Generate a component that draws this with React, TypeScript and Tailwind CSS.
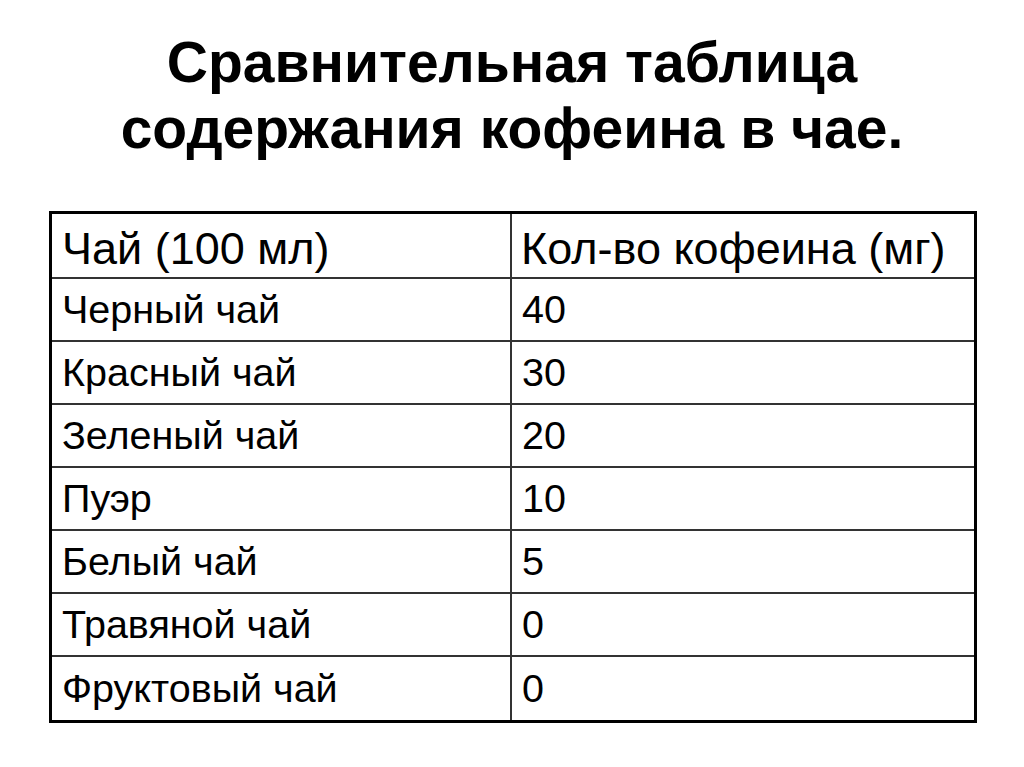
import React from "react";

const rows: [string, string][] = [
  ["Черный чай", "40"],
  ["Красный чай", "30"],
  ["Зеленый чай", "20"],
  ["Пуэр", "10"],
  ["Белый чай", "5"],
  ["Травяной чай", "0"],
  ["Фруктовый чай", "0"],
];

export default function App() {
  return (
    <div
      className="w-[1024px] h-[767px] bg-white text-black overflow-hidden"
      style={{ fontFamily: '"Liberation Sans", Arial, sans-serif' }}
    >
      <h1 className="pt-[29px] text-center font-bold text-[57px] leading-[66px]">
        Сравнительная таблица
        <br />
        содержания кофеина в чае.
      </h1>
      <div className="mt-[50px] ml-[49px] w-[928px] border-[3px] border-black">
        <div className="flex h-[65px] border-b-2 border-[#333]">
          <div className="w-[460px] border-r-2 border-[#333] flex items-center pl-[10px] pt-[5px] text-[45px] leading-none">
            Чай (100 мл)
          </div>
          <div className="flex-1 flex items-center pl-[9px] pt-[5px] text-[45px] leading-none">
            Кол-во кофеина (мг)
          </div>
        </div>
        {rows.map(([name, val], i) => (
          <div
            key={name}
            className={
              i < rows.length - 1
                ? "flex h-[63px] border-b-2 border-[#333]"
                : "flex h-[63px]"
            }
          >
            <div className="w-[460px] border-r-2 border-[#333] flex items-center pl-[10px] text-[39.5px] leading-none">
              {name}
            </div>
            <div className="flex-1 flex items-center pl-[10px] text-[39.5px] leading-none">
              {val}
            </div>
          </div>
        ))}
      </div>
    </div>
  );
}
